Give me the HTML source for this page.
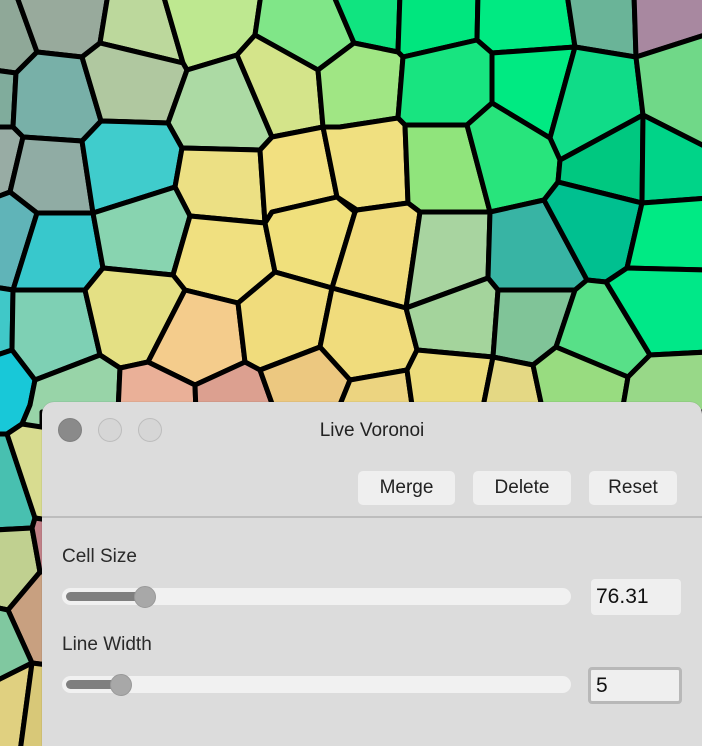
<!DOCTYPE html>
<html><head><meta charset="utf-8">
<style>
*{margin:0;padding:0;box-sizing:border-box}
html,body{width:702px;height:746px;overflow:hidden;background:#ddd;font-family:"Liberation Sans",sans-serif}
svg{position:absolute;left:0;top:0}
#panel{position:absolute;left:42px;top:402px;width:660px;height:344px;background:#dcdcdc;border-radius:12px 12px 0 0;box-shadow:0 0 1px rgba(0,0,0,.3)}
.tl{position:absolute;top:16px;width:24px;height:24px;border-radius:50%;border:1px solid #bdbdbd;background:#d6d6d6}
.title{position:absolute;left:0;width:660px;text-align:center;top:18px;font-size:19px;color:#222}
.btn{position:absolute;top:69px;height:34px;background:#efefef;border-radius:5px;font-size:19px;color:#222;text-align:center;line-height:34px}
.sep{position:absolute;left:0;top:114px;width:660px;height:2px;background:#bdbdbd}
.lbl{position:absolute;left:20px;font-size:19px;color:#2a2a2a}
.track{position:absolute;left:20px;width:509px;height:17px;border-radius:9px;background:#f1f1f1}
.fill{position:absolute;left:4px;top:4px;height:9px;border-radius:5px;background:#7f7f7f}
.knob{position:absolute;top:-2px;width:22px;height:22px;border-radius:50%;background:#a8a8a8;border:1px solid #999}
.field{position:absolute;background:#efefef;border-radius:4px;font-size:21px;color:#111;padding-left:5px}
</style></head><body>
<svg width="702" height="746" viewBox="0 0 702 746" style="overflow:hidden">
<g stroke="#000" stroke-width="5" stroke-linejoin="round">
<polygon points="-6,-6 16,-6 37,52 16,73 -6,70" fill="#8fa898"/>
<polygon points="16,-6 108,-6 100,43 82,57 37,52" fill="#98aa9c"/>
<polygon points="108,-6 163,-6 183,63 100,43" fill="#bcd89c"/>
<polygon points="163,-6 261,-6 255,35 237,55 187,70 183,63" fill="#bee890"/>
<polygon points="261,-6 333,-6 354,43 318,70 255,35" fill="#80e688"/>
<polygon points="333,-6 400,-6 398,52 354,43" fill="#10e480"/>
<polygon points="400,-6 478,-6 477,40 403,57 398,52" fill="#00e67e"/>
<polygon points="478,-6 567,-6 575,47 492,53 477,40" fill="#00ea82"/>
<polygon points="567,-6 634,-6 636,57 575,47" fill="#6ab498"/>
<polygon points="634,-6 708,-6 708,34 636,57" fill="#a888a0"/>
<polygon points="-6,70 16,73 13,127 -6,127" fill="#80ac9c"/>
<polygon points="16,73 37,52 82,57 101,121 82,141 23,137 13,127" fill="#78b0a8"/>
<polygon points="82,57 100,43 183,63 187,70 168,123 101,121" fill="#b0c8a0"/>
<polygon points="187,70 237,55 272,137 260,150 182,148 168,123" fill="#acdaa4"/>
<polygon points="237,55 255,35 318,70 323,127 272,137" fill="#d4e48a"/>
<polygon points="318,70 354,43 398,52 403,57 398,118 340,127 323,127" fill="#a0e684"/>
<polygon points="403,57 477,40 492,53 492,103 467,125 405,125 398,118" fill="#18e480"/>
<polygon points="492,53 575,47 550,138 492,103" fill="#00ea82"/>
<polygon points="575,47 636,57 643,115 560,160 550,138" fill="#10dc88"/>
<polygon points="636,57 708,34 708,148 643,115" fill="#70d888"/>
<polygon points="-6,127 13,127 23,137 10,192 -6,198" fill="#98aca4"/>
<polygon points="23,137 82,141 93,213 37,213 10,192" fill="#90aca4"/>
<polygon points="82,141 101,121 168,123 182,148 175,187 93,213" fill="#40cccc"/>
<polygon points="182,148 260,150 265,223 190,216 175,187" fill="#ece084"/>
<polygon points="260,150 272,137 323,127 337,197 272,212 265,223" fill="#f2e080"/>
<polygon points="323,127 340,127 398,118 405,125 408,203 357,210 337,197" fill="#f0e080"/>
<polygon points="405,125 467,125 490,212 420,212 408,203" fill="#90e47c"/>
<polygon points="467,125 492,103 550,138 560,160 558,182 544,200 490,212" fill="#28e47c"/>
<polygon points="560,160 643,115 642,203 558,182" fill="#00c880"/>
<polygon points="643,115 708,148 708,198 642,203" fill="#00d488"/>
<polygon points="-6,198 10,192 37,213 13,290 -6,287" fill="#60b4b8"/>
<polygon points="37,213 93,213 103,268 85,290 13,290" fill="#38c8cc"/>
<polygon points="93,213 175,187 190,216 173,275 103,268" fill="#88d4b0"/>
<polygon points="190,216 265,223 275,272 238,303 185,290 173,275" fill="#f0e080"/>
<polygon points="265,223 272,212 337,197 355,212 332,288 275,272" fill="#f0e07c"/>
<polygon points="355,212 357,210 408,203 420,212 406,308 332,288" fill="#f0dc7c"/>
<polygon points="420,212 490,212 488,278 406,308" fill="#a8d4a0"/>
<polygon points="490,212 544,200 587,280 575,290 498,290 488,278" fill="#38b4a4"/>
<polygon points="544,200 558,182 642,203 627,268 606,282 587,280" fill="#00c090"/>
<polygon points="642,203 708,198 708,270 627,268" fill="#00ea84"/>
<polygon points="-6,287 13,290 12,350 -6,356" fill="#40c8c8"/>
<polygon points="13,290 85,290 100,355 35,380 12,350" fill="#7ed0b4"/>
<polygon points="85,290 103,268 173,275 185,290 148,362 120,368 100,355" fill="#e4e084"/>
<polygon points="185,290 238,303 245,362 195,385 148,362" fill="#f4cc8c"/>
<polygon points="238,303 275,272 332,288 320,347 260,370 245,362" fill="#f0dc7c"/>
<polygon points="332,288 406,308 417,350 407,370 350,380 320,347" fill="#f0dc7c"/>
<polygon points="406,308 488,278 498,290 493,357 417,350" fill="#a4d49c"/>
<polygon points="498,290 575,290 556,347 533,365 493,357" fill="#80c498"/>
<polygon points="575,290 587,280 606,282 650,355 628,377 556,347" fill="#58e088"/>
<polygon points="606,282 627,268 708,270 708,352 650,355" fill="#00e888"/>
<polygon points="-6,356 12,350 35,380 30,405 22,424 7,434 -6,434" fill="#18c8d8"/>
<polygon points="35,380 100,355 120,368 118,412 42,412 42,428 22,424 30,405" fill="#98d4a8"/>
<polygon points="120,368 148,362 195,385 196,412 118,412" fill="#eab098"/>
<polygon points="195,385 245,362 260,370 275,412 196,412" fill="#dca090"/>
<polygon points="260,370 320,347 350,380 337,412 275,412" fill="#ecc880"/>
<polygon points="350,380 407,370 413,412 337,412" fill="#ecd480"/>
<polygon points="407,370 417,350 493,357 482,412 413,412" fill="#ecdc7c"/>
<polygon points="493,357 533,365 543,412 482,412" fill="#e4d884"/>
<polygon points="533,365 556,347 628,377 622,412 543,412" fill="#98dc80"/>
<polygon points="628,377 650,355 708,352 708,412 622,412" fill="#98d888"/>
<polygon points="-6,434 7,434 35,518 32,528 -6,530" fill="#48c0b0"/>
<polygon points="7,434 22,424 48,428 48,520 35,518" fill="#d8dc90"/>
<polygon points="-6,530 32,528 40,572 8,610 -6,607" fill="#c0d090"/>
<polygon points="35,518 48,520 48,572 40,572 32,528" fill="#c08088"/>
<polygon points="40,572 48,572 48,665 32,663 8,610" fill="#c8a080"/>
<polygon points="-6,607 8,610 32,663 -6,682" fill="#80c8a0"/>
<polygon points="-6,682 32,663 20,752 -6,752" fill="#e0d080"/>
<polygon points="32,663 48,665 48,752 20,752" fill="#d8c878"/>
</g>
</svg>
<div id="panel">
  <div class="tl" style="left:16px;background:#8a8a8a;border-color:#808080"></div>
  <div class="tl" style="left:56px"></div>
  <div class="tl" style="left:96px"></div>
  <div class="title">Live Voronoi</div>
  <div class="btn" style="left:316px;width:97px">Merge</div>
  <div class="btn" style="left:431px;width:98px">Delete</div>
  <div class="btn" style="left:547px;width:88px">Reset</div>
  <div class="sep"></div>
  <div class="lbl" style="top:144px">Cell Size</div>
  <div class="track" style="top:186px"><div class="fill" style="width:80px"></div><div class="knob" style="left:72px"></div></div>
  <div class="field" style="left:549px;top:177px;width:90px;height:36px;line-height:36px">76.31</div>
  <div class="lbl" style="top:232px">Line Width</div>
  <div class="track" style="top:274px"><div class="fill" style="width:56px"></div><div class="knob" style="left:48px"></div></div>
  <div class="field" style="left:546px;top:265px;width:94px;height:37px;line-height:31px;border:3px solid #b8b8b8">5</div>
</div>
</body></html>
